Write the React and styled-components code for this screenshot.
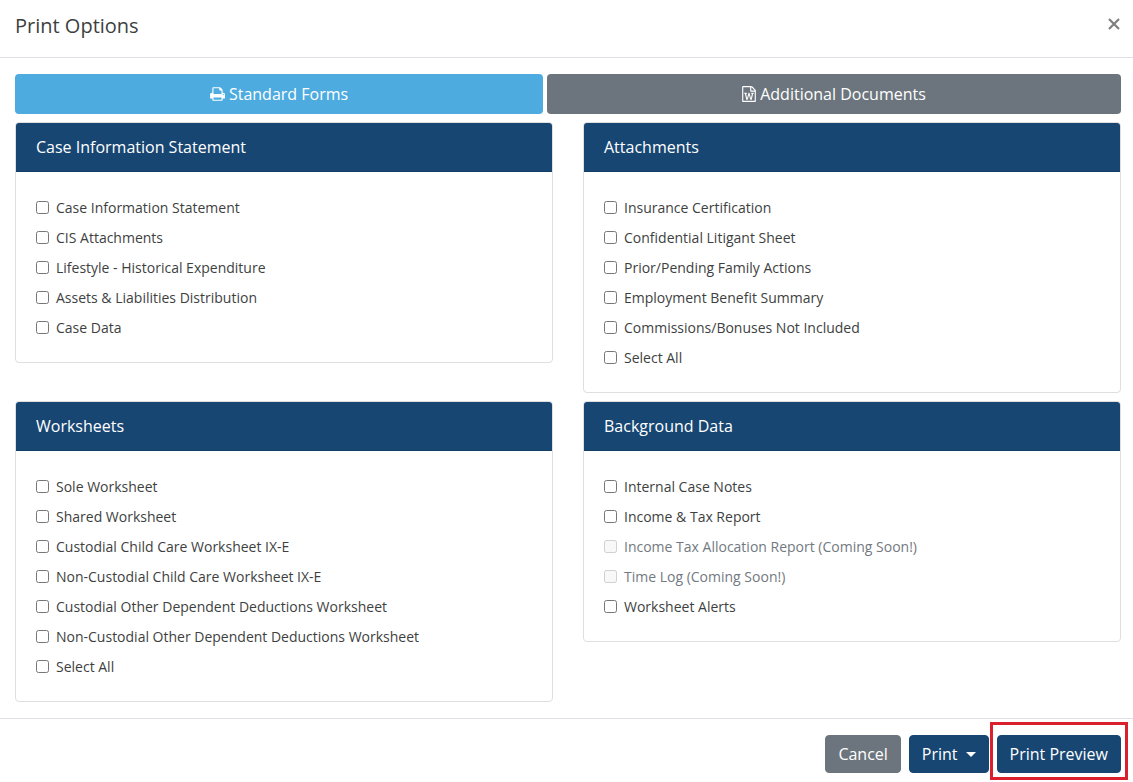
import React from "react";
import styled, { createGlobalStyle, css } from "styled-components";

const Global = createGlobalStyle`
  *, *::before, *::after { box-sizing: border-box; }
  body {
    margin: 0;
    background: #fff;
    color: #3e3f3f;
    font-family: "Open Sans", "Noto Sans", sans-serif;
    font-size: 14px;
    line-height: 21px;
  }
`;

const Dialog = styled.main`
  display: flex;
  flex-direction: column;
`;

const Header = styled.header`
  display: flex;
  justify-content: space-between;
  align-items: flex-start;
  padding: 11px 12px 16px 15px;
  border-bottom: 1px solid #dee2e6;
`;

const Title = styled.h1`
  margin: 0;
  font-size: 20px;
  font-weight: 400;
  line-height: 30px;
`;

const Close = styled.button`
  display: flex;
  margin: 0;
  padding: 6px 0;
  border: 0;
  background: none;
  color: #7f7f7f;
`;

const Body = styled.div`
  padding: 16px 12px 16px 15px;
`;

const Tabs = styled.div`
  display: grid;
  grid-template-columns: 23fr 25fr;
  gap: 4px;
`;

const buttonText = css`
  display: flex;
  align-items: center;
  justify-content: center;
  border-radius: 4px;
  color: #fff;
  font-family: inherit;
  font-size: 16px;
  line-height: 24px;
`;

const Tab = styled.button`
  ${buttonText}
  gap: 4px;
  height: 40px;
  padding: 8px 12px;
  border: 0;
  background: ${(p) => (p.$active ? "#4dabe0" : "#6c757d")};
`;

const Cards = styled.div`
  display: grid;
  grid-template-columns: 1fr 1fr;
  align-items: start;
  gap: 8px 30px;
  margin-top: 8px;
`;

const Card = styled.section`
  border: 1px solid #dfdfdf;
  border-radius: 4px;
  overflow: hidden;
`;

const CardTitle = styled.h2`
  margin: 0;
  padding: 12px 20px;
  border-bottom: 1px solid #153e65;
  background: #184672;
  color: #fff;
  font-size: 16px;
  font-weight: 400;
  line-height: 24px;
`;

const Options = styled.div`
  display: flex;
  flex-direction: column;
  padding: 20px;
`;

const Option = styled.label`
  display: flex;
  align-items: center;
  gap: 7px;
  height: 30px;
  color: ${(p) => (p.$disabled ? "#73797f" : "inherit")};
`;

const Check = styled.input`
  width: 13px;
  height: 13px;
  margin: 0;
`;

const Footer = styled.footer`
  display: flex;
  justify-content: flex-end;
  align-items: center;
  gap: 8px;
  padding: 16px 12px 8px;
  border-top: 1px solid #dee2e6;
`;

const Action = styled.button`
  ${buttonText}
  gap: 8px;
  height: 38px;
  padding: 6px 12px;
  border: 1px solid ${(p) => (p.$muted ? "#6c757d" : "#184672")};
  background: ${(p) => (p.$muted ? "#6c757d" : "#184672")};
`;

const Highlight = styled.div`
  position: relative;

  &::after {
    content: "";
    position: absolute;
    inset: -13px -7px -7px;
    border: 3px solid #d9202c;
    pointer-events: none;
  }
`;

const Caret = styled.span`
  border: 5px solid transparent;
  border-top-color: #fff;
  border-bottom: 0;
`;

const PrintIcon = () => (
  <svg width="15" height="16" viewBox="0 0 1664 1792" fill="currentColor" aria-hidden="true">
    <path d="M384 1536h896v-256h-896v256zM384 896h896v-384h-160q-40 0-68-28t-28-68v-160h-640v640zM1536 960q0-26-19-45t-45-19-45 19-19 45 19 45 45 19 45-19 19-45zM1664 960v416q0 13-9.5 22.5t-22.5 9.5h-224v160q0 40-28 68t-68 28h-960q-40 0-68-28t-28-68v-160h-224q-13 0-22.5-9.5t-9.5-22.5v-416q0-79 56.5-135.5t135.5-56.5h64v-544q0-40 28-68t68-28h672q40 0 88 20t76 48l152 152q28 28 48 76t20 88v256h64q79 0 135.5 56.5t56.5 135.5z" />
  </svg>
);

const WordFileIcon = () => (
  <svg width="14" height="16" viewBox="0 0 1536 1792" fill="currentColor" aria-hidden="true">
    <path d="M1468 380q28 28 48 76t20 88v1152q0 40-28 68t-68 28h-1344q-40 0-68-28t-28-68v-1600q0-40 28-68t68-28h896q40 0 88 20t76 48zM1024 136v376h376q-10-29-22-41l-313-313q-12-12-41-22zM1408 1664v-1024h-416q-40 0-68-28t-28-68v-416h-768v1536h1280zM233 768v107h70l164 661h159l128-485q7-20 10-46 2-16 2-24h4l3 24q1 3 3.5 20t5.5 26l128 485h159l164-661h70v-107h-300v107h90l-99 438q-5 20-7 46l-2 21h-4q0-3-.5-6.5t-1.5-8-1-6.5q-1-5-4-21t-5-25l-144-545h-114l-144 545q-2 9-4.5 24.5t-3.5 21.5l-4 21h-4l-2-21q-2-26-7-46l-99-438h90v-107h-300z" />
  </svg>
);

const groups = [
  { title: "Case Information Statement", items: ["Case Information Statement", "CIS Attachments", "Lifestyle - Historical Expenditure", "Assets & Liabilities Distribution", "Case Data"] },
  { title: "Attachments", items: ["Insurance Certification", "Confidential Litigant Sheet", "Prior/Pending Family Actions", "Employment Benefit Summary", "Commissions/Bonuses Not Included", "Select All"] },
  { title: "Worksheets", items: ["Sole Worksheet", "Shared Worksheet", "Custodial Child Care Worksheet IX-E", "Non-Custodial Child Care Worksheet IX-E", "Custodial Other Dependent Deductions Worksheet", "Non-Custodial Other Dependent Deductions Worksheet", "Select All"] },
  { title: "Background Data", items: ["Internal Case Notes", "Income & Tax Report", "Income Tax Allocation Report (Coming Soon!)", "Time Log (Coming Soon!)", "Worksheet Alerts"] },
];

export default function App() {
  return (
    <Dialog>
      <Global />
      <Header>
        <Title>Print Options</Title>
        <Close type="button" aria-label="Close">
          <svg width="14" height="14" viewBox="0 0 14 14" stroke="currentColor" strokeWidth="2.2">
            <path d="M2 2l10 10M12 2l-10 10" />
          </svg>
        </Close>
      </Header>
      <Body>
        <Tabs>
          <Tab type="button" $active><PrintIcon />Standard Forms</Tab>
          <Tab type="button"><WordFileIcon />Additional Documents</Tab>
        </Tabs>
        <Cards>
          {groups.map((group) => (
            <Card key={group.title}>
              <CardTitle>{group.title}</CardTitle>
              <Options>
                {group.items.map((item) => {
                  const disabled = item.includes("Coming Soon");
                  return (
                    <Option key={item} $disabled={disabled}>
                      <Check type="checkbox" disabled={disabled} />
                      {item}
                    </Option>
                  );
                })}
              </Options>
            </Card>
          ))}
        </Cards>
      </Body>
      <Footer>
        <Action type="button" $muted>Cancel</Action>
        <Action type="button">Print<Caret /></Action>
        <Highlight><Action type="button">Print Preview</Action></Highlight>
      </Footer>
    </Dialog>
  );
}
